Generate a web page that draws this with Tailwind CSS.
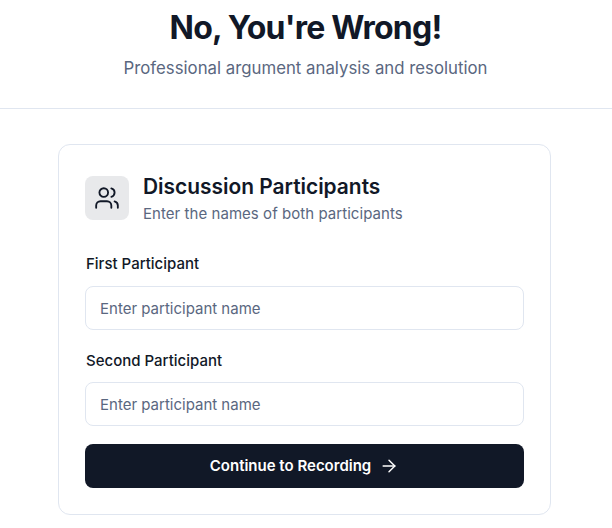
<!DOCTYPE html>
<html lang="en">
<head>
    <meta charset="UTF-8">
    <meta name="viewport" content="width=device-width, initial-scale=1.0">
    <title>No, You're Wrong!</title>
    <script src="https://cdn.jsdelivr.net/npm/@tailwindcss/browser@4"></script>
</head>
<body class="bg-white font-['Inter',sans-serif] overflow-hidden h-[528px]">

    <!-- Header -->
    <header class="h-[109px] border-b border-[#e0e6f0] flex flex-col items-center">
        <h1 class="mt-[8px] -ml-[1px] text-[32px] leading-[40px] font-bold tracking-[-0.8px] text-[#111827]">No, You're Wrong!</h1>
        <p class="mt-[8px] -ml-[1px] text-[16.8px] leading-[24px] text-[#5a6780]">Professional argument analysis and resolution</p>
    </header>

    <!-- Participants card -->
    <main class="pt-[35px] pl-[58px]">
        <div class="w-[493px] h-[371px] bg-white border border-[#e0e6f0] rounded-xl px-[26px] pt-[31px]">
            <div class="flex items-start gap-[14px]">
                <div class="w-11 h-11 rounded-lg bg-[#e8e9eb] flex items-center justify-center text-[#111827]">
                    <svg xmlns="http://www.w3.org/2000/svg" class="w-[26px] h-[26px]" viewBox="0 0 24 24" fill="none" stroke="currentColor" stroke-width="1.7" stroke-linecap="round" stroke-linejoin="round"><path d="M16 21v-2a4 4 0 0 0-4-4H6a4 4 0 0 0-4 4v2"/><circle cx="9" cy="7" r="4"/><path d="M22 21v-2a4 4 0 0 0-3-3.87"/><path d="M16 3.13a4 4 0 0 1 0 7.75"/></svg>
                </div>
                <div>
                    <h2 class="text-[20.9px] leading-[28px] font-semibold text-[#111827] -mt-[3px]">Discussion Participants</h2>
                    <p class="text-[15px] leading-[20px] tracking-[0.05px] text-[#5a6780] mt-[3px]">Enter the names of both participants</p>
                </div>
            </div>

            <label class="block mt-[30px] pl-px text-[15px] leading-[20px] font-medium text-[#111827]">First Participant</label>
            <input type="text" placeholder="Enter participant name" class="block w-full h-11 mt-[12px] px-[14px] text-[15px] border border-[#e0e6f0] rounded-lg bg-white placeholder:text-[#5a6780]">

            <label class="block mt-[21px] pl-px text-[15px] leading-[20px] font-medium text-[#111827]">Second Participant</label>
            <input type="text" placeholder="Enter participant name" class="block w-full h-11 mt-[11px] px-[14px] text-[15px] border border-[#e0e6f0] rounded-lg bg-white placeholder:text-[#5a6780]">

            <button class="w-full h-11 mt-[18px] bg-[#111827] text-white rounded-lg text-[15px] font-semibold flex items-center justify-center gap-[8px]">
                Continue to Recording
                <svg xmlns="http://www.w3.org/2000/svg" class="w-5 h-5" viewBox="0 0 24 24" fill="none" stroke="currentColor" stroke-width="1.7" stroke-linecap="round" stroke-linejoin="round"><path d="M5 12h14"/><path d="m12 5 7 7-7 7"/></svg>
            </button>
        </div>
    </main>
</body>
</html>
